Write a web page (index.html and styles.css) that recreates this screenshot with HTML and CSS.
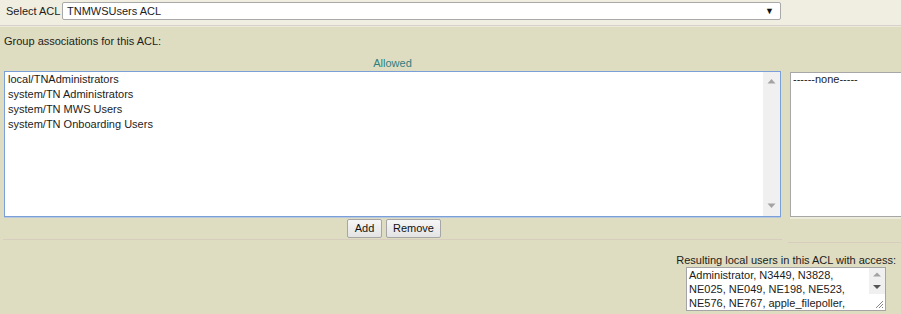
FILE: index.html
```html
<!DOCTYPE html>
<html>
<head>
<meta charset="utf-8">
<link rel="stylesheet" href="styles.css">
</head>
<body>
<div class="topbar">
  <span class="lbl">Select ACL</span>
  <div class="dropdown"><span>TNMWSUsers ACL</span><span class="caret">&#9660;</span></div>
</div>
<div class="main">
  <div class="title">Group associations for this ACL:</div>
  <div class="cols">
    <div class="left">
      <div class="allowed">Allowed</div>
      <div class="listbox">
        <div class="items">
          <div>local/TNAdministrators</div>
          <div>system/TN Administrators</div>
          <div>system/TN MWS Users</div>
          <div>system/TN Onboarding Users</div>
        </div>
        <div class="vscroll">
          <svg width="17" height="14" viewBox="0 0 17 14"><path d="M4.5 9.5 L8.5 5 L12.5 9.5 Z" fill="#a3a3a3"/></svg>
          <svg width="17" height="14" viewBox="0 0 17 14"><path d="M4.5 4.5 L8.5 9 L12.5 4.5 Z" fill="#a3a3a3"/></svg>
        </div>
      </div>
      <div class="btnrow">
        <button class="btn add">Add</button>
        <button class="btn remove">Remove</button>
      </div>
    </div>
    <div class="right">
      <div class="listbox2"><div class="none">------none-----</div></div>
      <div class="rsep"></div>
    </div>
  </div>
  <div class="result">
    <div class="rlabel">Resulting local users in this ACL with access:</div>
    <div class="tarea">
      <div class="ttext">Administrator, N3449, N3828, NE025, NE049, NE198, NE523, NE576, NE767, apple_filepoller,</div>
      <div class="tscroll">
        <div class="tbar">
          <svg width="16" height="13" viewBox="0 0 16 13"><path d="M4 8.5 L8 4.5 L12 8.5 Z" fill="#a3a3a3"/></svg>
          <svg width="16" height="13" viewBox="0 0 16 13"><path d="M4 4 L8 8 L12 4 Z" fill="#555"/></svg>
        </div>
        <svg class="grip" width="10" height="10" viewBox="0 0 10 10"><path d="M9 2 L2 9 M9 5 L5 9 M9 8 L8 9" stroke="#888" stroke-width="1"/></svg>
      </div>
    </div>
  </div>
</div>
</body>
</html>
```
FILE: styles.css
```css
html, body {
  margin: 0;
  padding: 0;
}
body {
  width: 901px;
  height: 314px;
  overflow: hidden;
  background: #dfddc1;
  font-family: "Liberation Sans", Arial, sans-serif;
  font-size: 11px;
  color: #1c1c1c;
}
.topbar {
  background: #efeee0;
  border-bottom: 1px solid #d9cfcb;
  box-shadow: 0 1px 0 #f3f1e6;
  display: flex;
  align-items: flex-start;
  box-sizing: border-box;
  height: 26px;
  padding-top: 2px;
}
.lbl {
  margin-left: 6px;
  width: 56px;
  line-height: 18px;
}
.dropdown {
  width: 719px;
  height: 18px;
  box-sizing: border-box;
  background: #fff;
  border: 1px solid #a9a9a9;
  border-radius: 2px;
  display: flex;
  justify-content: space-between;
  align-items: center;
  padding: 0 6px 0 4px;
  font-size: 11px;
}
.caret {
  font-size: 9px;
  color: #111;
}
.main {
  padding: 7px 0 0 4px;
  border-top: 1px solid #ecead8;
}
.title {
  line-height: 14px;
  height: 14px;
}
.cols {
  display: flex;
  gap: 9px;
  margin-top: 8px;
}
.left {
  width: 777px;
  flex: none;
}
.allowed {
  text-align: center;
  color: #2f8080;
  line-height: 14px;
  height: 14px;
  margin-bottom: 1px;
}
.listbox {
  height: 146px;
  box-sizing: border-box;
  background: #fff;
  border: 1px solid #7b9fd8;
  box-shadow: 0 1px 0 #b8c8de;
  display: flex;
}
.items {
  flex: 1;
  padding: 0 0 0 3px;
  line-height: 15px;
}
.vscroll {
  width: 17px;
  background: #f0f0f0;
  display: flex;
  flex-direction: column;
  justify-content: space-between;
  padding: 2px 0 3px;
  box-sizing: border-box;
}
.vscroll svg {
  display: block;
}
.btnrow {
  margin-top: 2px;
  height: 19px;
  display: flex;
  justify-content: center;
  gap: 4px;
  padding-bottom: 1px;
  border-bottom: 1px solid #d7cdbf;
  margin-left: -1px;
  margin-right: -1px;
  padding-left: 3px;
}
.btn {
  height: 19px;
  box-sizing: border-box;
  font-family: "Liberation Sans", Arial, sans-serif;
  font-size: 11px;
  color: #111;
  background: linear-gradient(#f6f6f6, #e3e3e3);
  border: 1px solid #a6a6a6;
  border-radius: 2px;
  padding: 0;
  line-height: 17px;
}
.add {
  width: 35px;
}
.remove {
  width: 55px;
}
.right {
  flex: 1;
  padding-top: 16px;
}
.listbox2 {
  height: 145px;
  box-sizing: border-box;
  background: #fff;
  border: 1px solid #a7a7a7;
  border-right: none;
  box-shadow: 0 2px 0 #ecead8;
}
.none {
  padding: 0 0 0 2px;
  line-height: 13px;
}
.rsep {
  margin: 25px 0 0 -2px;
  border-top: 1px solid #d7cdbf;
}
.result {
  display: flex;
  flex-direction: column;
  align-items: flex-end;
  padding-top: 10px;
  padding-right: 5px;
}
.rlabel {
  line-height: 14px;
}
.tarea {
  width: 200px;
  height: 44px;
  box-sizing: border-box;
  margin-right: 10px;
  background: #fff;
  border: 1px solid #a5a5a5;
  display: flex;
  overflow: hidden;
}
.ttext {
  flex: 1;
  padding: 0 0 0 2px;
  line-height: 14px;
}
.tscroll {
  width: 16px;
  display: flex;
  flex-direction: column;
  justify-content: space-between;
}
.tbar {
  background: #f0f0f0;
  height: 26px;
  display: flex;
  flex-direction: column;
}
.tbar svg {
  display: block;
}
.grip {
  display: block;
  align-self: flex-end;
  margin: 0 1px 1px 0;
}
```
